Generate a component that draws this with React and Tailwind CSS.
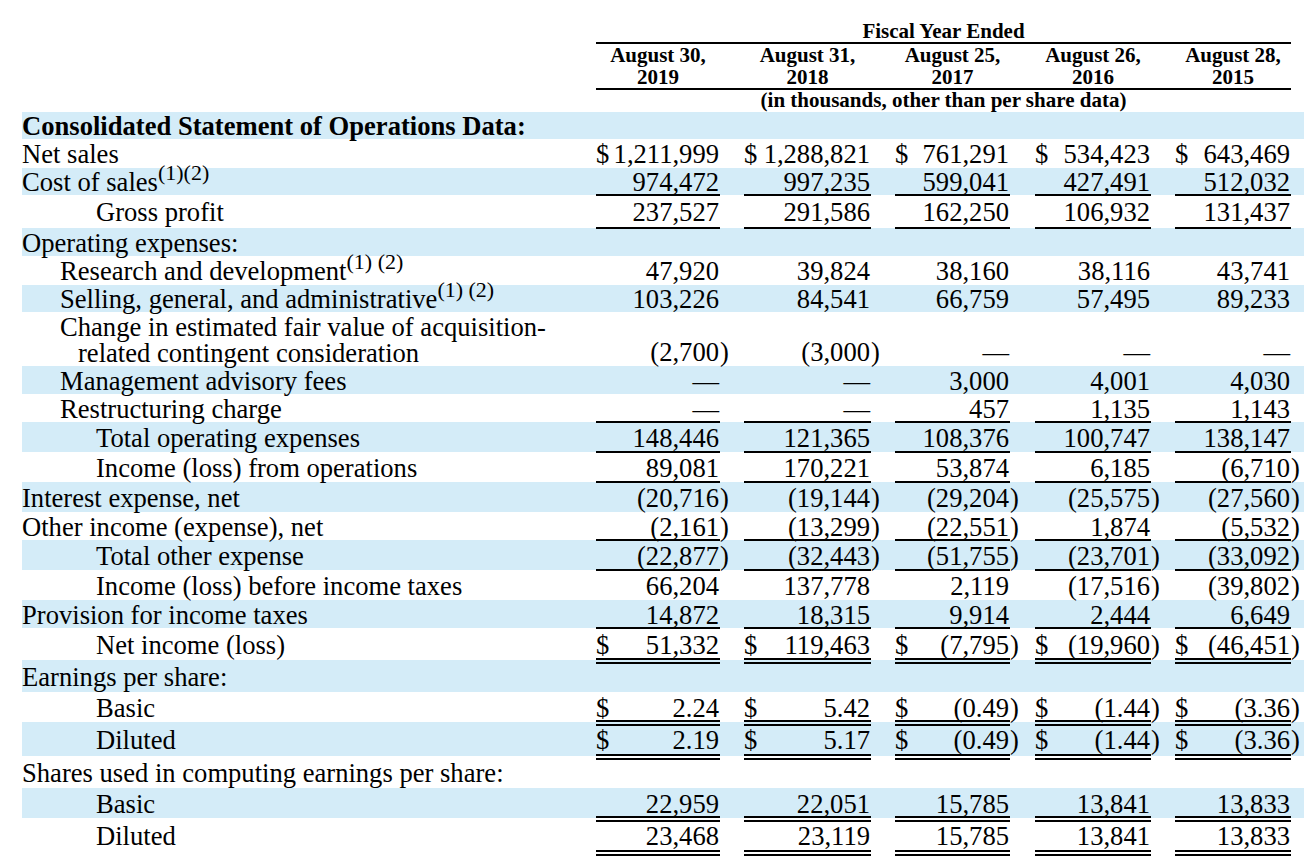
import React from "react";

const VW = ["w-[124px]", "w-[127px]", "w-[115px]", "w-[116px]", "w-[116px]"];
const PW = ["w-[24px]", "w-[24px]", "w-[25px]", "w-[24px]", "w-[13px]"];

const rows = [
  { label: "Consolidated Statement of Operations Data:", bold: true, h: "h-[27px]", blue: true },
  { label: "Net sales", h: "h-[29px]", dollar: true, vals: ["1,211,999", "1,288,821", "761,291", "534,423", "643,469"] },
  { label: "Cost of sales", sup: "(1)(2)", h: "h-[27px]", blue: true, ul: 1, vals: ["974,472", "997,235", "599,041", "427,491", "512,032"] },
  { label: "Gross profit", ind: 2, h: "h-[33px]", ul: 1, vals: ["237,527", "291,586", "162,250", "106,932", "131,437"] },
  { label: "Operating expenses:", h: "h-[28px]", blue: true },
  { label: "Research and development", sup: "(1) (2)", ind: 1, h: "h-[29px]", vals: ["47,920", "39,824", "38,160", "38,116", "43,741"] },
  { label: "Selling, general, and administrative", sup: "(1) (2)", ind: 1, h: "h-[27px]", blue: true, vals: ["103,226", "84,541", "66,759", "57,495", "89,233"] },
  { label: "Change in estimated fair value of acquisition-", label2: "related contingent consideration", ind: 1, h: "h-[54px]", vals: ["(2,700)", "(3,000)", "—", "—", "—"] },
  { label: "Management advisory fees", ind: 1, h: "h-[28px]", blue: true, vals: ["—", "—", "3,000", "4,001", "4,030"] },
  { label: "Restructuring charge", ind: 1, h: "h-[28px]", ul: 1, vals: ["—", "—", "457", "1,135", "1,143"] },
  { label: "Total operating expenses", ind: 2, h: "h-[30px]", blue: true, ul: 1, vals: ["148,446", "121,365", "108,376", "100,747", "138,147"] },
  { label: "Income (loss) from operations", ind: 2, h: "h-[30px]", ul: 1, vals: ["89,081", "170,221", "53,874", "6,185", "(6,710)"] },
  { label: "Interest expense, net", h: "h-[30px]", blue: true, vals: ["(20,716)", "(19,144)", "(29,204)", "(25,575)", "(27,560)"] },
  { label: "Other income (expense), net", h: "h-[28px]", ul: 1, vals: ["(2,161)", "(13,299)", "(22,551)", "1,874", "(5,532)"] },
  { label: "Total other expense", ind: 2, h: "h-[30px]", blue: true, ul: 1, vals: ["(22,877)", "(32,443)", "(51,755)", "(23,701)", "(33,092)"] },
  { label: "Income (loss) before income taxes", ind: 2, h: "h-[30px]", vals: ["66,204", "137,778", "2,119", "(17,516)", "(39,802)"] },
  { label: "Provision for income taxes", h: "h-[28px]", blue: true, ul: 1, vals: ["14,872", "18,315", "9,914", "2,444", "6,649"] },
  { label: "Net income (loss)", ind: 2, h: "h-[32px]", ul: 2, dollar: true, vals: ["51,332", "119,463", "(7,795)", "(19,960)", "(46,451)"] },
  { label: "Earnings per share:", h: "h-[32px]", blue: true },
  { label: "Basic", ind: 2, h: "h-[30px]", ul: 2, dollar: true, vals: ["2.24", "5.42", "(0.49)", "(1.44)", "(3.36)"] },
  { label: "Diluted", ind: 2, h: "h-[34px]", blue: true, ul: 2, dollar: true, vals: ["2.19", "5.17", "(0.49)", "(1.44)", "(3.36)"] },
  { label: "Shares used in computing earnings per share:", h: "h-[32px]" },
  { label: "Basic", ind: 2, h: "h-[30px]", blue: true, ul: 2, vals: ["22,959", "22,051", "15,785", "13,841", "13,833"] },
  { label: "Diluted", ind: 2, h: "h-[34px]", ul: 2, vals: ["23,468", "23,119", "15,785", "13,841", "13,833"] },
];

const IND = ["pl-0", "pl-[38px]", "pl-[74px]"];

const UL_VAL = {
  0: "pt-[2px]",
  1: "-mb-[1px] pt-[3px] border-b-2 border-black",
  2: "-mb-[4px] pt-[4px] border-b-[6px] border-double border-black",
};
const UL_PAR = {
  0: "pt-[2px]",
  1: "-mb-[1px] pt-[3px] border-b-2 border-transparent",
  2: "-mb-[4px] pt-[4px] border-b-[6px] border-transparent",
};

function ValueCells({ r }) {
  if (!r.vals) return <div className="flex-1" />;
  const u = r.ul || 0;
  const align = r.label2 ? "items-end" : "items-center";
  return (
    <>
      {r.vals.map((v, i) => {
        const neg = v.endsWith(")");
        const num = neg ? v.slice(0, -1) : v;
        return (
          <React.Fragment key={i}>
            <div className={`${VW[i]} shrink-0 flex justify-between pr-[1px] ${align} ${UL_VAL[u]}`}>
              <span>{r.dollar ? "$" : ""}</span>
              <span>{num}</span>
            </div>
            <div className={`${PW[i]} shrink-0 flex ${align} ${UL_PAR[u]}`}>
              <span>{neg ? ")" : ""}</span>
            </div>
          </React.Fragment>
        );
      })}
    </>
  );
}

function Row({ r }) {
  return (
    <div className={`flex w-[1282px] ${r.h} ${r.blue ? "bg-[#d4ecf8]" : ""}`}>
      <div
        className={`w-[574px] shrink-0 flex flex-col justify-center pt-[2px] whitespace-nowrap ${IND[r.ind || 0]} ${
          r.bold ? "font-bold" : ""
        }`}
      >
        <div className={r.label2 ? "leading-[26px]" : "leading-none"}>
          {r.label}
          {r.sup && <span className="text-[22px] align-[11px] leading-[0px]">{r.sup}</span>}
        </div>
        {r.label2 && <div className="leading-[26px] pl-[18px]">{r.label2}</div>}
      </div>
      <ValueCells r={r} />
    </div>
  );
}

const DATES = [
  ["August 30,", "2019"],
  ["August 31,", "2018"],
  ["August 25,", "2017"],
  ["August 26,", "2016"],
  ["August 28,", "2015"],
];

export default function App() {
  return (
    <div className="w-[1304px] h-[860px] bg-white text-black pl-[22px] font-['Liberation_Serif','Times_New_Roman',serif] overflow-hidden">
      <div className="flex font-bold text-[21px]">
        <div className="w-[574px] shrink-0" />
        <div className="w-[695px] shrink-0">
          <div className="h-[44px] border-b-2 border-black flex items-end justify-center leading-[21px]">
            Fiscal Year Ended
          </div>
          <div className="h-[46px] border-b-2 border-black flex leading-[22px]">
            {DATES.map((d, i) => (
              <React.Fragment key={i}>
                <div className={`${VW[i]} shrink-0 text-center`}>
                  <div>{d[0]}</div>
                  <div>{d[1]}</div>
                </div>
                {i < 4 && <div className={`${PW[i]} shrink-0`} />}
              </React.Fragment>
            ))}
          </div>
          <div className="h-[22px] text-center leading-[21px]">
            (in thousands, other than per share data)
          </div>
        </div>
      </div>
      <div className="text-[26.6px] leading-none">
        {rows.map((r, i) => (
          <Row key={i} r={r} />
        ))}
      </div>
    </div>
  );
}
